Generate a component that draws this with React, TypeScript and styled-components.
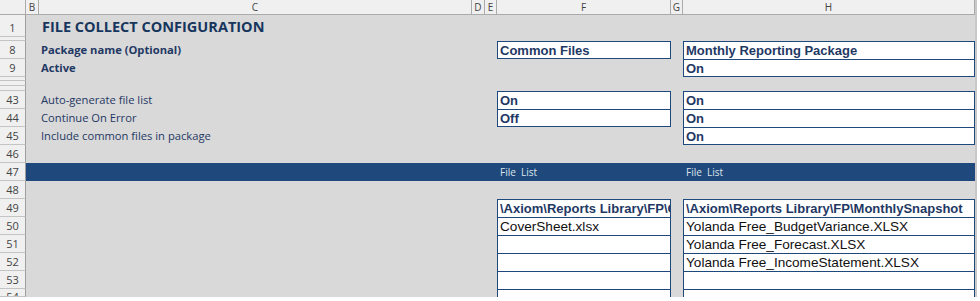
import React from "react";
import styled, { createGlobalStyle } from "styled-components";

const GlobalStyle = createGlobalStyle`
  html, body {
    margin: 0;
    padding: 0;
    background: #ffffff;
  }
  body {
    font-family: "Open Sans", "Noto Sans", sans-serif;
  }
`;

const COLS = "26px 13px 433px 13px 12px 174px 12px 292px";
const NAVY = "#1f497d";
const INK = "#1f3864";

const Sheet = styled.div`
  width: 975px;
  height: 297px;
  overflow: hidden;
  border-right: 2px solid #c9c9c9;
  background: #d9d9d9;
`;

const HeaderRow = styled.div`
  display: grid;
  grid-template-columns: ${COLS};
  height: 15px;
  background: #f0f0f0;
`;

const ColHead = styled.div`
  box-sizing: border-box;
  border-right: 1px solid #ababab;
  border-bottom: 1px solid #ababab;
  font-size: 10px;
  line-height: 14px;
  color: #444;
  text-align: center;
  overflow: hidden;
`;

const Row = styled.div<{ h: number; band?: boolean }>`
  display: grid;
  grid-template-columns: ${COLS};
  height: ${(p) => p.h}px;
  background: ${(p) => (p.band ? NAVY : "#d9d9d9")};
`;

const RowHead = styled.div<{ top?: boolean }>`
  grid-column: 1;
  box-sizing: border-box;
  background: #f0f0f0;
  border-right: 1px solid #9e9e9e;
  border-bottom: 1px solid #c4c4c4;
  color: #444;
  font-size: 11px;
  display: flex;
  align-items: ${(p) => (p.top ? "flex-start" : "flex-end")};
  justify-content: center;
  line-height: 15px;
  padding-bottom: ${(p) => (p.top ? 0 : 1)}px;
  overflow: hidden;
`;

const Title = styled.div`
  grid-column: 3;
  padding-left: 3px;
  font-size: 14.5px;
  font-weight: 700;
  color: #17365d;
  display: flex;
  align-items: center;
  padding-top: 1px;
  white-space: nowrap;
`;

const Label = styled.div<{ bold?: boolean }>`
  grid-column: 3;
  padding-left: 2px;
  font-size: 11.2px;
  font-weight: ${(p) => (p.bold ? 700 : 400)};
  color: ${INK};
  display: flex;
  align-items: flex-end;
  padding-bottom: 2px;
  white-space: nowrap;
`;

const BandText = styled.div<{ col: number }>`
  grid-column: ${(p) => p.col};
  padding-left: 3px;
  font-size: 10px;
  color: #dde3ea;
  display: flex;
  align-items: center;
  white-space: pre;
`;

const Box = styled.div<{ col: number; last?: boolean; bold?: boolean; open?: boolean }>`
  grid-column: ${(p) => p.col};
  box-sizing: border-box;
  background: #ffffff;
  border: 1px solid ${NAVY};
  border-bottom: ${(p) => (p.last ? `1px solid ${NAVY}` : "none")};
  font-family: "Liberation Sans", Arial, sans-serif;
  font-size: ${(p) => (p.bold ? 13 : 13.6)}px;
  font-weight: ${(p) => (p.bold ? 700 : 400)};
  color: ${(p) => (p.bold ? INK : "#111")};
  padding-left: 2px;
  padding-top: 1px;
  line-height: 16px;
  white-space: nowrap;
  overflow: hidden;
  height: ${(p) => (p.open ? "100%" : "auto")};
`;

const columns = ["", "B", "C", "D", "E", "F", "G", "H"];

const App: React.FC = () => {
  const listF = ["CoverSheet.xlsx", "", "", ""];
  const listH = [
    "Yolanda Free_BudgetVariance.XLSX",
    "Yolanda Free_Forecast.XLSX",
    "Yolanda Free_IncomeStatement.XLSX",
    "",
  ];

  return (
    <>
      <GlobalStyle />
      <Sheet>
        <HeaderRow>
          {columns.map((c, i) => (
            <ColHead key={i}>{c}</ColHead>
          ))}
        </HeaderRow>

        <Row h={22}>
          <RowHead>1</RowHead>
          <Title>FILE COLLECT CONFIGURATION</Title>
        </Row>
        <Row h={4}>
          <RowHead />
        </Row>
        <Row h={18}>
          <RowHead>8</RowHead>
          <Label bold>Package name (Optional)</Label>
          <Box col={6} bold last>Common Files</Box>
          <Box col={8} bold>Monthly Reporting Package</Box>
        </Row>
        <Row h={18}>
          <RowHead>9</RowHead>
          <Label bold>Active</Label>
          <Box col={8} bold last>On</Box>
        </Row>
        <Row h={4}>
          <RowHead>10</RowHead>
        </Row>
        <Row h={5}>
          <RowHead>11</RowHead>
        </Row>
        <Row h={5}>
          <RowHead />
        </Row>
        <Row h={18}>
          <RowHead>43</RowHead>
          <Label>Auto-generate file list</Label>
          <Box col={6} bold>On</Box>
          <Box col={8} bold>On</Box>
        </Row>
        <Row h={18}>
          <RowHead>44</RowHead>
          <Label>Continue On Error</Label>
          <Box col={6} bold last>Off</Box>
          <Box col={8} bold>On</Box>
        </Row>
        <Row h={18}>
          <RowHead>45</RowHead>
          <Label>Include common files in package</Label>
          <Box col={8} bold last>On</Box>
        </Row>
        <Row h={18}>
          <RowHead>46</RowHead>
        </Row>
        <Row h={18} band>
          <RowHead>47</RowHead>
          <BandText col={6}>{"File  List"}</BandText>
          <BandText col={8}>{"File  List"}</BandText>
        </Row>
        <Row h={18}>
          <RowHead>48</RowHead>
        </Row>
        <Row h={18}>
          <RowHead>49</RowHead>
          <Box col={6} bold>\Axiom\Reports Library\FP\CoverSheets</Box>
          <Box col={8} bold>\Axiom\Reports Library\FP\MonthlySnapshot</Box>
        </Row>
        {listF.map((f, i) => (
          <Row h={18} key={i}>
            <RowHead>{50 + i}</RowHead>
            <Box col={6}>{f}</Box>
            <Box col={8}>{listH[i]}</Box>
          </Row>
        ))}
        <Row h={8}>
          <RowHead top>54</RowHead>
          <Box col={6} open />
          <Box col={8} open />
        </Row>
      </Sheet>
    </>
  );
};

export default App;
